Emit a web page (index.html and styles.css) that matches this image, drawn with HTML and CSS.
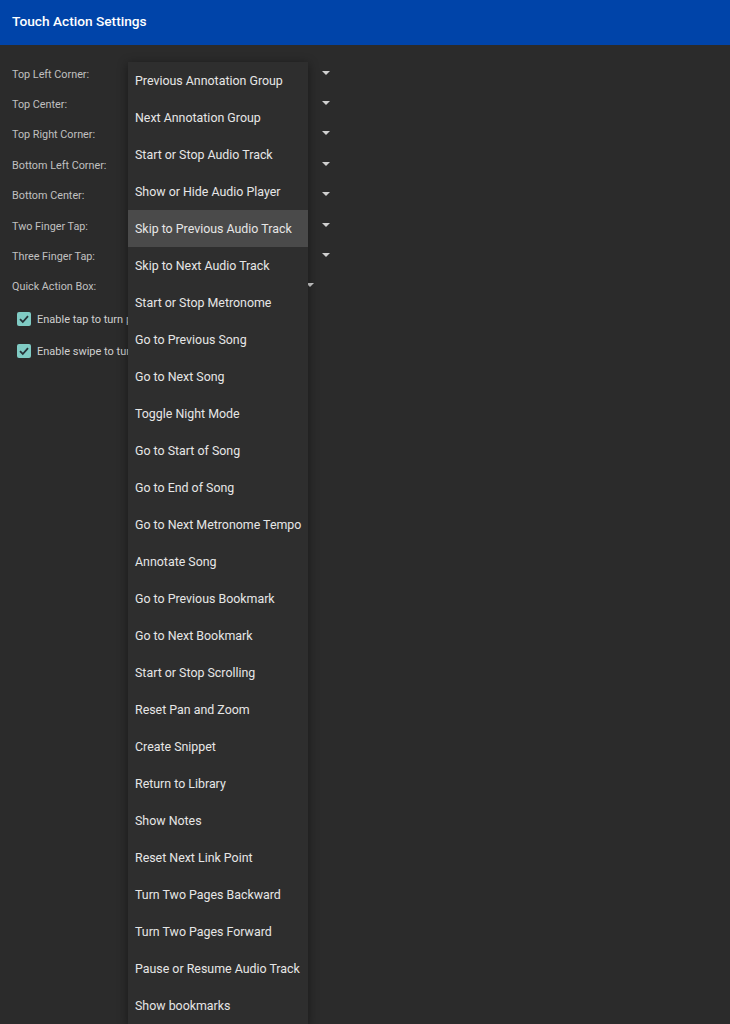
FILE: index.html
```html
<!DOCTYPE html>
<html>
<head>
<meta charset="utf-8">
<link rel="stylesheet" href="styles.css">
</head>
<body>
<header class="appbar">Touch Action Settings</header>
<main class="settings">
  <div class="row"><span class="label">Top Left Corner:</span><span class="spinner"><span class="arrow"></span></span></div>
  <div class="row"><span class="label">Top Center:</span><span class="spinner"><span class="arrow"></span></span></div>
  <div class="row"><span class="label">Top Right Corner:</span><span class="spinner"><span class="arrow"></span></span></div>
  <div class="row"><span class="label">Bottom Left Corner:</span><span class="spinner"><span class="arrow"></span></span></div>
  <div class="row"><span class="label">Bottom Center:</span><span class="spinner"><span class="arrow"></span></span></div>
  <div class="row"><span class="label">Two Finger Tap:</span><span class="spinner"><span class="arrow"></span></span></div>
  <div class="row"><span class="label">Three Finger Tap:</span><span class="spinner"><span class="arrow"></span></span></div>
  <div class="row"><span class="label">Quick Action Box:</span><span class="spinner narrow"><span class="arrow"></span></span></div>
  <div class="check-row first"><span class="checkbox"><svg viewBox="0 0 14 14" width="14" height="14"><path d="M3 7.2 L5.8 10 L11 4.2" fill="none" stroke="#263238" stroke-width="1.8"/></svg></span><span class="check-label">Enable tap to turn pages</span></div>
  <div class="check-row"><span class="checkbox"><svg viewBox="0 0 14 14" width="14" height="14"><path d="M3 7.2 L5.8 10 L11 4.2" fill="none" stroke="#263238" stroke-width="1.8"/></svg></span><span class="check-label">Enable swipe to turn pages</span></div>
</main>
<ul class="menu">
  <li>Previous Annotation Group</li>
  <li>Next Annotation Group</li>
  <li>Start or Stop Audio Track</li>
  <li>Show or Hide Audio Player</li>
  <li class="active">Skip to Previous Audio Track</li>
  <li>Skip to Next Audio Track</li>
  <li>Start or Stop Metronome</li>
  <li>Go to Previous Song</li>
  <li>Go to Next Song</li>
  <li>Toggle Night Mode</li>
  <li>Go to Start of Song</li>
  <li>Go to End of Song</li>
  <li>Go to Next Metronome Tempo</li>
  <li>Annotate Song</li>
  <li>Go to Previous Bookmark</li>
  <li>Go to Next Bookmark</li>
  <li>Start or Stop Scrolling</li>
  <li>Reset Pan and Zoom</li>
  <li>Create Snippet</li>
  <li>Return to Library</li>
  <li>Show Notes</li>
  <li>Reset Next Link Point</li>
  <li>Turn Two Pages Backward</li>
  <li>Turn Two Pages Forward</li>
  <li>Pause or Resume Audio Track</li>
  <li>Show bookmarks</li>
</ul>
</body>
</html>
```
FILE: styles.css
```css
html, body {
  margin: 0;
  padding: 0;
  height: 1024px;
  overflow: hidden;
}
body {
  background: #2b2b2b;
  font-family: Roboto, "Liberation Sans", sans-serif;
  position: relative;
}
.appbar {
  height: 45px;
  background: #0044a9;
  color: #ffffff;
  font-size: 13.7px;
  font-weight: 500;
  display: flex;
  align-items: center;
  padding-left: 12px;
  box-sizing: border-box;
  padding-bottom: 3px;
}
.settings {
  padding-top: 14px;
  display: flex;
  flex-direction: column;
}
.row {
  height: 30.4px;
  display: flex;
  align-items: center;
  padding-left: 12px;
}
.label {
  width: 116px;
  font-size: 10.8px;
  color: #c0c0c0;
}
.spinner {
  width: 202px;
  display: flex;
  justify-content: flex-end;
  align-items: center;
}
.spinner.narrow {
  width: 186px;
}
.arrow {
  width: 0;
  height: 0;
  border-left: 4px solid transparent;
  border-right: 4px solid transparent;
  border-top: 4px solid #d0d0d0;
  margin-top: -3px;
}
.check-row {
  height: 32px;
  display: flex;
  align-items: center;
  padding-left: 17px;
  gap: 6px;
}
.check-row.first {
  margin-top: 1px;
}
.checkbox {
  width: 14px;
  height: 14px;
  border-radius: 2px;
  background: #80cbc4;
  display: flex;
}
.check-label {
  font-size: 11px;
  color: #d0d0d0;
  white-space: nowrap;
}
.menu {
  position: absolute;
  left: 128px;
  top: 62px;
  width: 180px;
  margin: 0;
  padding: 0;
  list-style: none;
  background: #2e2e2e;
  box-shadow: 0 2px 10px rgba(0, 0, 0, 0.45);
}
.menu li {
  height: 37px;
  display: flex;
  align-items: center;
  padding-left: 7px;
  font-size: 12.4px;
  color: #e6e6e6;
  white-space: nowrap;
}
.menu li.active {
  background: #4a4a4a;
}
```
